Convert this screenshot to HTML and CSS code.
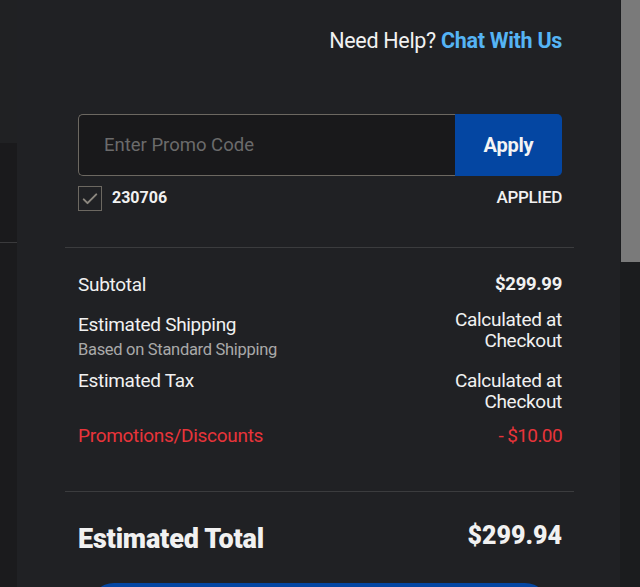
FILE: index.html
```html
<!DOCTYPE html>
<html lang="en">
<head>
<meta charset="utf-8">
<title>Order Summary</title>
<link rel="stylesheet" href="styles.css">
</head>
<body>
<div class="page-strip">
  <div class="strip-top"></div>
  <div class="strip-card"></div>
  <div class="strip-rest"></div>
</div>
<aside class="drawer">
  <p class="help">Need Help? <a class="chat" href="#">Chat With Us</a></p>

  <div class="promo-section">
    <form class="promo">
      <input class="promo-input" type="text" placeholder="Enter Promo Code">
      <button class="apply" type="button">Apply</button>
    </form>
    <div class="applied-row">
      <div class="code">
        <span class="checkbox">
          <svg viewBox="0 0 24 24" width="20" height="20"><path d="M4.5 12.5l4.5 4.5L19.5 6.5" fill="none" stroke="#8c877f" stroke-width="2.4" stroke-linecap="round" stroke-linejoin="round"/></svg>
        </span>
        <span class="code-text">230706</span>
      </div>
      <span class="applied">APPLIED</span>
    </div>
  </div>

  <div class="summary">
    <div class="row row-subtotal">
      <span class="label">Subtotal</span>
      <span class="value strong">$299.99</span>
    </div>
    <div class="row row-shipping">
      <div class="label">Estimated Shipping<span class="sub">Based on Standard Shipping</span></div>
      <span class="value">Calculated at<br>Checkout</span>
    </div>
    <div class="row row-tax">
      <span class="label">Estimated Tax</span>
      <span class="value">Calculated at<br>Checkout</span>
    </div>
    <div class="row promo-row">
      <span class="label">Promotions/Discounts</span>
      <span class="value">- $10.00</span>
    </div>
  </div>

  <div class="total">
    <span class="total-label">Estimated Total</span>
    <span class="total-value">$299.94</span>
  </div>

  <button class="checkout" type="button">Checkout</button>
</aside>
<div class="scrollbar"><div class="thumb"></div></div>
</body>
</html>
```
FILE: styles.css
```css
* { box-sizing: border-box; }
html, body { height: 100%; }
body {
  margin: 0;
  display: flex;
  height: 587px;
  overflow: hidden;
  background: #1c1c1e;
  font-family: Roboto, "Liberation Sans", Arial, sans-serif;
  color: #f1f1f1;
}
.page-strip {
  width: 17px;
  flex: none;
  display: flex;
  flex-direction: column;
}
.strip-top { height: 143px; background: #202123; }
.strip-card { height: 100px; background: #1a1a1c; border-bottom: 1px solid #3a3a3c; }
.strip-rest { flex: 1; background: #1b1b1d; }

.drawer {
  flex: 1;
  background: #202124;
  padding: 0 46px 0 48px;
  display: flex;
  flex-direction: column;
}
.help {
  margin: 29px 0 0;
  padding: 0 12px;
  text-align: right;
  font-size: 21.5px;
  line-height: 24px;
  letter-spacing: -0.3px;
  color: #f1f1f1;
}
.chat {
  color: #55b4f4;
  font-weight: 700;
  text-decoration: none;
}
.promo-section {
  margin-top: 61px;
  padding: 0 12px 36px 13px;
  border-bottom: 1px solid #3b3c3e;
}
.promo {
  display: flex;
  height: 62px;
  margin: 0;
}
.promo-input {
  flex: 1;
  min-width: 0;
  background: #19191b;
  border: 1px solid #6c6861;
  border-right: none;
  border-radius: 5px 0 0 5px;
  padding: 0 25px;
  font-family: inherit;
  font-size: 18.5px;
  color: #eee;
  outline: none;
}
.promo-input::placeholder { color: #6b6b6b; }
.apply {
  width: 107px;
  border: none;
  border-radius: 0 5px 5px 0;
  background: #0446a2;
  color: #f4f4f4;
  font-family: inherit;
  font-size: 20px;
  font-weight: 700;
  letter-spacing: -0.2px;
}
.applied-row {
  margin-top: 10px;
  display: flex;
  align-items: center;
  justify-content: space-between;
  height: 25px;
}
.code { display: flex; align-items: center; gap: 10px; }
.checkbox {
  width: 24px;
  height: 25px;
  border: 1px solid #6c6861;
  display: flex;
  align-items: center;
  justify-content: center;
}
.code-text {
  font-size: 16px;
  font-weight: 700;
  margin-top: -3px;
}
.applied {
  font-size: 17px;
  font-weight: 500;
  margin-top: -3px;
  letter-spacing: -0.3px;
}

.summary {
  padding: 26px 12px 45px 13px;
  border-bottom: 1px solid #3b3c3e;
  display: flex;
  flex-direction: column;
}
.row {
  display: flex;
  justify-content: space-between;
  align-items: flex-start;
  font-size: 19px;
  line-height: 21px;
  letter-spacing: -0.3px;
}
.label { display: flex; flex-direction: column; }
.sub {
  margin-top: 3px;
  font-size: 16.5px;
  line-height: 24px;
  color: #a9a9a9;
}
.value { text-align: right; }
.value.strong { font-weight: 700; font-size: 18.5px; }
.row-shipping { margin-top: 14px; }
.row-shipping .label { margin-top: 5px; }
.row-tax { margin-top: 8px; }
.promo-row { color: #e8343a; margin-top: 13px; }
.promo-row .value { letter-spacing: -0.6px; }

.total {
  display: flex;
  justify-content: space-between;
  align-items: flex-start;
  padding: 29px 12px 0 13px;
}
.total-label {
  font-size: 27px;
  font-weight: 900;
  margin-top: 2px;
  letter-spacing: -0.2px;
}
.total-value {
  font-size: 25px;
  font-weight: 900;
}
.checkout {
  margin: 28px 25px 0 25px;
  height: 48px;
  border: none;
  border-radius: 24px;
  background: #0446a2;
  color: #fff;
  font-family: inherit;
  font-size: 20px;
  font-weight: 700;
  flex: none;
}

.scrollbar {
  width: 20px;
  flex: none;
  background: #1b1c1e;
}
.thumb {
  height: 262px;
  background: #7a7a7a;
  margin-left: 1px;
}
```
